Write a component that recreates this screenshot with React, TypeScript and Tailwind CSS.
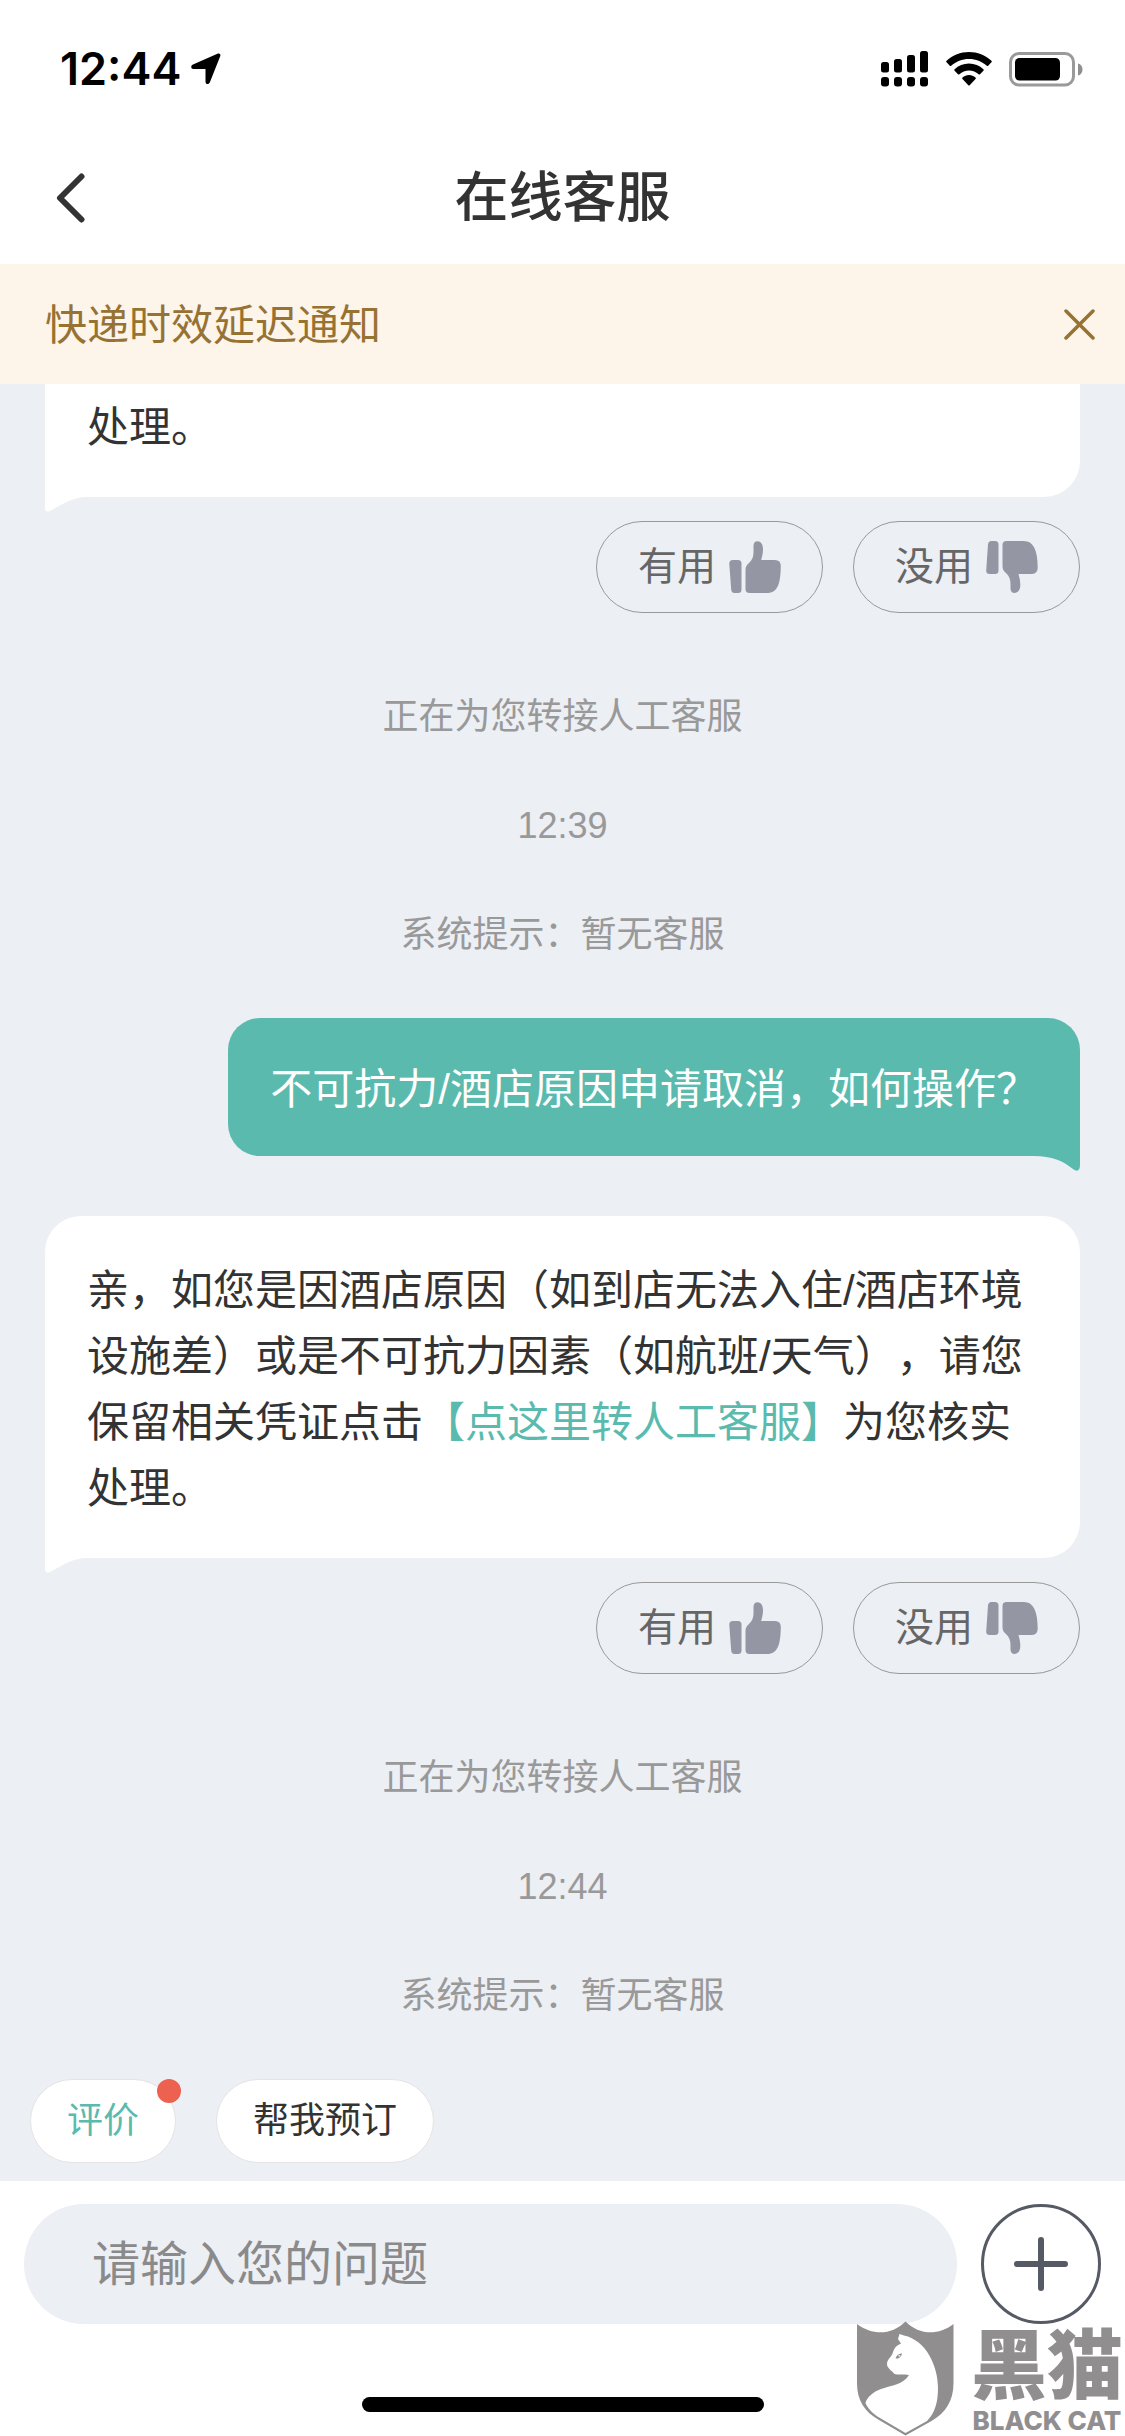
import { useState } from "react";
import type { ReactNode } from "react";

function StatusBar() {
  return (
    <div className="flex h-[132px] items-center justify-between pr-[42px] pl-[60px] pt-1.5">
      <div className="flex items-center gap-2.5">
        <span className="font-[Inter,sans-serif] text-[45px] leading-[54px] font-semibold text-black">12:44</span>
        <svg width="30" height="32" viewBox="0 0 30 32" aria-hidden="true">
          <path d="M27 .6 2 11.6C-.6 12.8-.2 16 2.400 16H14.500V28.400C14.500 31.600 17.800 32 18.900 29.300L29.200 3.200C29.900 1.400 28.700-.1 27 .6Z" fill="#000" />
        </svg>
      </div>
      <div className="flex items-center gap-[17px]">
        <svg width="48" height="36" viewBox="0 0 48 36" aria-hidden="true">
          <rect x="0" y="11" width="8" height="10.500" rx="2.500" />
          <rect x="13" y="8" width="8" height="13.500" rx="2.500" />
          <rect x="26" y="4" width="8" height="17.500" rx="2.500" />
          <rect x="39" y="0" width="8" height="21.500" rx="2.500" />
          <rect x="0" y="26" width="8" height="9.500" rx="3" />
          <rect x="13" y="26" width="8" height="9.500" rx="3" />
          <rect x="26" y="26" width="8" height="9.500" rx="3" />
          <rect x="39" y="26" width="8" height="9.500" rx="3" />
        </svg>
        <svg width="46" height="34" viewBox="0 0 46 34" aria-hidden="true">
          <path d="M.6 10.300a1 1 0 0 1 0-1.500C6.700 3.300 14.500 0 23 0s16.300 3.300 22.400 8.800a1 1 0 0 1 0 1.500l-3.200 3.400a1 1 0 0 1-1.400 0C36 9.500 29.800 7 23 7S10 9.500 5.200 13.700a1 1 0 0 1-1.400 0Z" />
          <path d="M8.600 18.700a1 1 0 0 1 0-1.500C12.400 13.700 17.500 11.500 23 11.500s10.600 2.200 14.400 5.700a1 1 0 0 1 0 1.500l-3.400 3.500a1 1 0 0 1-1.400 0C30 19.800 26.700 18.400 23 18.400s-7 1.400-9.600 3.800a1 1 0 0 1-1.400 0Z" />
          <path d="M16.500 27a1 1 0 0 1 0-1.500C18.300 24 20.500 23 23 23s4.700 1 6.500 2.500a1 1 0 0 1 0 1.500l-5.800 6.200a1 1 0 0 1-1.400 0Z" />
        </svg>
        <svg width="74" height="35" viewBox="0 0 74 35" aria-hidden="true">
          <rect x="1.500" y="1.500" width="63" height="31.500" rx="8.500" fill="none" stroke="#9a9a9a" strokeWidth="3" />
          <rect x="6" y="6" width="45" height="22.500" rx="4.500" />
          <path d="M69 11.500c3 .8 4.500 3 4.500 6s-1.500 5.200-4.500 6Z" fill="#8f8f8f" />
        </svg>
      </div>
    </div>
  );
}

function Header() {
  return (
    <header className="bg-white">
      <StatusBar />
      <div className="grid h-[132px] grid-cols-[1fr_auto_1fr] items-center">
        <button type="button" aria-label="返回" className="justify-self-start pl-14">
          <svg width="29" height="50" viewBox="0 0 29 50" fill="none" stroke="#333" strokeWidth="6" strokeLinecap="round" strokeLinejoin="round" aria-hidden="true">
            <path d="M25.500 3.500 4 25l21.500 21.500" />
          </svg>
        </button>
        <h1 className="text-[54px] leading-[66px] font-medium">在线客服</h1>
      </div>
    </header>
  );
}

function Notice({ onClose }: { onClose: () => void }) {
  return (
    <div className="flex h-[120px] items-center justify-between bg-[#fdf4ea] pr-[30px] pl-[45px]">
      <p className="pt-1 text-[42px] leading-[60px] text-[#967233]">快递时效延迟通知</p>
      <button type="button" aria-label="关闭" onClick={onClose}>
        <svg width="31" height="31" viewBox="0 0 31 31" fill="none" stroke="#967233" strokeWidth="3.500" strokeLinecap="round" aria-hidden="true">
          <path d="M2 2l27 27M29 2 2 29" />
        </svg>
      </button>
    </div>
  );
}

function ReceivedBubble({ children, continued = false }: { children: ReactNode; continued?: boolean }) {
  return (
    <div className={continued ? "relative rounded-br-[36px] bg-white px-[42px] pt-[11px] pb-9" : "relative rounded-t-[36px] rounded-br-[36px] bg-white px-[42px] pt-[42px] pb-9"}>
      <p className="text-[42px] leading-[66px]">{children}</p>
      <svg className="absolute top-full left-0 -mt-px" width="42" height="16" viewBox="0 0 42 16" fill="#fff" aria-hidden="true">
        <path d="M0 0h42v1C28 1 18 8 6 14.500 3 16 0 16 0 12Z" />
      </svg>
    </div>
  );
}

function SentBubble({ children }: { children: ReactNode }) {
  return (
    <div className="relative self-end rounded-t-[32px] rounded-bl-[32px] bg-[#5bbaae] px-[42px] pt-[42px] pb-9">
      <p className="text-[42px] leading-[60px] text-white">{children}</p>
      <svg className="absolute top-full right-0 -mt-px" width="46" height="16" viewBox="0 0 46 16" fill="#5bbaae" aria-hidden="true">
        <path d="M46 0H0v1C18 1 29 6 39 14c4 3 7 2 7-4Z" />
      </svg>
    </div>
  );
}

function ThumbUp() {
  return (
    <svg width="52" height="52" viewBox="0 0 52 52" fill="#9497a3" aria-hidden="true">
      <path d="M4 19h5q3.500 0 3.500 3.500v26q0 3.500-3.500 3.500H5.500Q2.500 52 2.200 48.500L.3 23Q0 19 4 19Z" />
      <path d="M28.300.2C32 .2 34 3.500 34 8c0 4-.8 7.500-1.800 11H46q6 0 5.800 6.500C51.500 42 49 52 38 52H20.500q-4 0-4-4V29c0-3 1-5 3.500-7 3.500-3 4.500-7 4.500-11V5C24.500 2 26 .2 28.300.2Z" />
    </svg>
  );
}

function ThumbDown() {
  return (
    <svg width="52" height="52" viewBox="0 0 52 52" fill="#9497a3" aria-hidden="true">
      <path d="M5.500 0H9q3.500 0 3.500 3.500v26Q12.500 33 9 33H4Q0 33 .2 29.500L2 3.500Q2.300 0 5.500 0Z" />
      <path d="M20.500 0H38c9 0 13.700 8.500 13.700 26.500Q51.700 33 46 33H32.500c1 3.500 1.800 7 1.800 11 0 4.500-2.300 8-5.800 8-2.500 0-4-1.800-4-4.800V43c0-4-1-8-4.500-11-2.500-2-3.500-4-3.500-7V4q0-4 4-4Z" />
    </svg>
  );
}

function Feedback() {
  return (
    <div className="mt-6 flex justify-end gap-[30px]">
      <button type="button" className="flex h-[92px] items-center gap-[13px] rounded-full border border-[#999] px-[41px] text-[39px] text-[#666]">
        有用
        <ThumbUp />
      </button>
      <button type="button" className="flex h-[92px] items-center gap-[13px] rounded-full border border-[#999] px-[41px] text-[39px] text-[#666]">
        没用
        <ThumbDown />
      </button>
    </div>
  );
}

function SystemLines({ time }: { time: string }) {
  return (
    <div className="mt-[77px] flex flex-col gap-[55px] text-center text-[36px] leading-[54px] text-[#999]">
      <p>正在为您转接人工客服</p>
      <time>{time}</time>
      <p>系统提示：暂无客服</p>
    </div>
  );
}

function QuickActions() {
  return (
    <div className="flex gap-10 px-[30px] pb-[18px]">
      <button type="button" className="relative h-[84px] rounded-full border border-[#e4e4e4] bg-white px-9 text-[36px] text-[#5bbaae]">
        评价
        <span className="absolute -top-px -right-1.5 size-6 rounded-full bg-[#ec6150]" />
      </button>
      <button type="button" className="h-[84px] rounded-full border border-[#e4e4e4] bg-white px-9 text-[36px]">
        帮我预订
      </button>
    </div>
  );
}

function BlackCatMark() {
  return (
    <div className="pointer-events-none absolute right-0.5 bottom-0 flex items-end gap-[17px] text-[#918e8f]">
      <svg width="98" height="115" viewBox="0 0 98 115" aria-hidden="true">
        <path d="M1 3C17 15 36 14 49.500.5 63 14 82 15 97.500 3V62c0 18-8 30-22 38L49.500 114.500 23 99C9 91 1 80 1 62Z" fill="currentColor" />
        <path d="M43.500 13 48 14.500C70 19 82 45 82 67c0 14-3 25-11 33L49.500 112 24 97C17 93 12 88 9.500 82 11 76 17 71 25 68 36 64 47 64 53 54c-5-1-11 0-14.500-1C35 49 31 47 31 43c0-5 5-7 6-12 1-4 4-7 8-8.500L42 18Z" fill="#fff" />
        <path d="M39.500 37.500c1-3 3.500-5.500 6.500-5-.5 3-3 5.500-6.500 5Z" fill="currentColor" />
        <path d="M42 34.500l2.500-.5-1 2Z" fill="#fff" />
      </svg>
      <div className="flex flex-col items-center gap-1 pb-[3px]">
        <span className="text-[76px] leading-[76px] font-black">黑猫</span>
        <span className="font-[Inter,sans-serif] text-[26px] leading-6 font-extrabold whitespace-nowrap">BLACK CAT</span>
      </div>
    </div>
  );
}

function Composer() {
  const [text, setText] = useState("");
  return (
    <footer className="relative bg-white px-6 pt-[23px]">
      <div className="flex items-center gap-6">
        <input
          type="text"
          aria-label="请输入您的问题"
          placeholder="请输入您的问题"
          value={text}
          onChange={(e) => setText(e.target.value)}
          className="h-[120px] min-w-0 flex-1 rounded-full bg-[#eceff4] px-[68px] text-[48px] outline-none placeholder:text-[#8a8a8a]"
        />
        <button type="button" aria-label="更多" className="shrink-0">
          <svg width="120" height="120" viewBox="0 0 120 120" fill="none" stroke="#555a65" strokeLinecap="round" aria-hidden="true">
            <circle cx="60" cy="60" r="58.500" strokeWidth="3" />
            <path d="M60 36v48M36 60h48" strokeWidth="6" />
          </svg>
        </button>
      </div>
      <div className="flex justify-center pt-[73px] pb-6">
        <div className="h-[15px] w-[402px] rounded-full bg-black" />
      </div>
      <BlackCatMark />
    </footer>
  );
}

export default function App() {
  const [showNotice, setShowNotice] = useState(true);

  return (
    <div className="flex min-h-screen flex-col bg-[#eceff4] font-['Liberation_Sans','Noto_Sans_CJK_SC',sans-serif] text-[#333] [text-spacing-trim:space-all]" lang="zh-CN">
      <Header />
      {showNotice && <Notice onClose={() => setShowNotice(false)} />}

      <main className="flex flex-1 flex-col px-[45px]">
        <ReceivedBubble continued>处理。</ReceivedBubble>
        <Feedback />
        <SystemLines time="12:39" />

        <div className="mt-14 flex flex-col gap-[60px]">
          <SentBubble>不可抗力/酒店原因申请取消，如何操作？</SentBubble>
          <ReceivedBubble>
            亲，如您是因酒店原因（如到店无法入住/酒店环境设施差）或是不可抗力因素（如航班/天气），请您保留相关凭证点击
            <a href="#agent" className="text-[#5bbaae]">【点这里转人工客服】</a>
            为您核实处理。
          </ReceivedBubble>
        </div>
        <Feedback />
        <SystemLines time="12:44" />
      </main>

      <QuickActions />
      <Composer />
    </div>
  );
}
